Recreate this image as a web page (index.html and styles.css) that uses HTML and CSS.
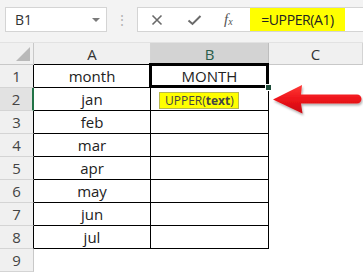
FILE: index.html
```html
<!DOCTYPE html>
<html lang="en">
<head>
    <meta charset="UTF-8">
    <title>UPPER function</title>
    <link rel="stylesheet" href="styles.css">
</head>
<body>
    <div class="toolbar">
        <div class="name-box">
            <span>B1</span>
            <span class="drop"></span>
        </div>
        <div class="grip">&#8942;</div>
        <div class="formula-box">
            <div class="fx-buttons">
                <svg class="btn-icon" width="12" height="12" viewBox="0 0 12 12">
                    <path d="M1.5 1.5 L10.5 10.5 M10.5 1.5 L1.5 10.5" stroke="#6a6a6a" stroke-width="1.6" fill="none"/>
                </svg>
                <svg class="btn-icon" width="15" height="12" viewBox="0 0 15 12">
                    <path d="M1.5 6.5 L5.5 10 L13.5 2" stroke="#6a6a6a" stroke-width="2" fill="none"/>
                </svg>
                <span class="fx">f<sub>x</sub></span>
            </div>
            <div class="formula">=UPPER(A1)</div>
        </div>
    </div>

    <div class="sheet">
        <div class="corner"><span class="tri"></span></div>
        <div class="col-head edge">A</div>
        <div class="col-head edge selected">B</div>
        <div class="col-head">C</div>

        <div class="row-head edge">1</div>
        <div class="cell">month</div>
        <div class="cell active">MONTH<span class="handle"></span></div>
        <div class="blank"></div>

        <div class="row-head edge current">2</div>
        <div class="cell">jan</div>
        <div class="cell tip-cell">
            <span class="tip">UPPER(<b>text</b>)</span>
        </div>
        <div class="blank"></div>

        <div class="row-head edge">3</div>
        <div class="cell">feb</div>
        <div class="cell"></div>
        <div class="blank"></div>

        <div class="row-head edge">4</div>
        <div class="cell">mar</div>
        <div class="cell"></div>
        <div class="blank"></div>

        <div class="row-head edge">5</div>
        <div class="cell">apr</div>
        <div class="cell"></div>
        <div class="blank"></div>

        <div class="row-head edge">6</div>
        <div class="cell">may</div>
        <div class="cell"></div>
        <div class="blank"></div>

        <div class="row-head edge">7</div>
        <div class="cell">jun</div>
        <div class="cell"></div>
        <div class="blank"></div>

        <div class="row-head edge">8</div>
        <div class="cell">jul</div>
        <div class="cell"></div>
        <div class="blank"></div>

        <div class="row-head">9</div>
        <div class="blank"></div>
        <div class="blank"></div>
        <div class="blank"></div>

        <!-- red pointer arrow over column C -->
        <svg class="arrow" width="93" height="40" viewBox="270 82 93 40">
            <defs>
                <linearGradient id="red" x1="0" y1="0" x2="0" y2="1">
                    <stop offset="0" stop-color="#ff3a36"/>
                    <stop offset="0.5" stop-color="#ee141b"/>
                    <stop offset="1" stop-color="#c90a10"/>
                </linearGradient>
                <filter id="shade" x="-10%" y="-20%" width="130%" height="150%">
                    <feDropShadow dx="1" dy="2" stdDeviation="1.2" flood-color="#000" flood-opacity="0.3"/>
                </filter>
            </defs>
            <path d="M273 99.5 L302 85 L301 94.5 L357 94.5 A4.5 4.5 0 0 1 357 103.5 L301 103.5 L302.5 113.5 Z" fill="url(#red)" filter="url(#shade)"/>
        </svg>
    </div>
</body>
</html>
```

FILE: styles.css
```css
body {
    margin: 0;
    width: 363px;
    height: 273px;
    overflow: hidden;
    background: #ffffff;
    font-family: 'Open Sans', 'Liberation Sans', sans-serif;
    color: #222222;
}

.toolbar {
    display: flex;
    align-items: flex-start;
    height: 43px;
    padding-top: 7px;
    box-sizing: border-box;
    background: #f3f3f3;
    border-bottom: 1px solid #e2e2e2;
}

.name-box {
    display: flex;
    align-items: center;
    justify-content: space-between;
    width: 102px;
    height: 25px;
    margin-left: 5px;
    padding: 0 6px 0 9px;
    box-sizing: border-box;
    background: #ffffff;
    border: 1px solid #d4d4d4;
    font-size: 14px;
    color: #333333;
}

.drop {
    width: 0;
    height: 0;
    border-left: 4px solid transparent;
    border-right: 4px solid transparent;
    border-top: 4px solid #7a7a7a;
}

.grip {
    width: 30px;
    height: 25px;
    line-height: 25px;
    text-align: center;
    color: #b5b5b5;
    font-size: 14px;
}

.formula-box {
    flex: 1;
    display: flex;
    height: 25px;
    box-sizing: border-box;
    background: #ffffff;
    border: 1px solid #d4d4d4;
    border-right: none;
}

.fx-buttons {
    display: flex;
    align-items: center;
    width: 112px;
    padding-left: 13px;
    box-sizing: border-box;
}

.btn-icon {
    margin-right: 24px;
}

.btn-icon + .btn-icon {
    margin-right: 22px;
}

.fx {
    font-family: 'Liberation Serif', serif;
    font-style: italic;
    font-size: 15px;
    color: #555555;
}

.fx sub {
    font-size: 10px;
    vertical-align: -1px;
}

.formula {
    width: 95px;
    height: 23px;
    line-height: 23px;
    text-align: center;
    background: #ffff00;
    font-size: 14px;
    letter-spacing: -0.4px;
    color: #222222;
}

.sheet {
    position: relative;
    display: grid;
    grid-template-columns: 34px 117px 118px 94px;
    grid-template-rows: 22px repeat(9, 23px);
}

.sheet > div {
    box-sizing: border-box;
}

.corner {
    display: flex;
    justify-content: flex-end;
    align-items: flex-end;
    padding: 0 3px 3px 0;
    background: #f0f0f0;
    border-right: 1px solid #c8c8c8;
    border-bottom: 1px solid #c8c8c8;
}

.tri {
    width: 0;
    height: 0;
    border-left: 14px solid transparent;
    border-bottom: 14px solid #b9b9b9;
}

.col-head {
    display: flex;
    justify-content: center;
    align-items: center;
    background: #f0f0f0;
    border-right: 1px solid #d4d4d4;
    border-bottom: 1px solid #c8c8c8;
    font-size: 15px;
    color: #333333;
}

.col-head.edge {
    border-bottom-color: #000000;
}

.col-head.selected {
    background: #d3d3d3;
    color: #2b5d4b;
    border-right-color: #bdbdbd;
}

.row-head {
    display: flex;
    justify-content: center;
    align-items: center;
    background: #f0f0f0;
    border-right: 1px solid #c8c8c8;
    border-bottom: 1px solid #d4d4d4;
    font-size: 15px;
    color: #444444;
}

.row-head.edge {
    border-right-color: #000000;
}

.row-head.current {
    background: #e2e2e2;
    border-right: 2px solid #217346;
}

.cell {
    position: relative;
    display: flex;
    justify-content: center;
    align-items: center;
    border-right: 1px solid #000000;
    border-bottom: 1px solid #000000;
    font-size: 15px;
    color: #222222;
}

.cell.active::after {
    content: "";
    position: absolute;
    left: -2px;
    top: -2px;
    right: -1px;
    bottom: -1px;
    border: 3px solid #000000;
}

.handle {
    position: absolute;
    right: -4px;
    bottom: -4px;
    width: 5px;
    height: 5px;
    background: #1e4d3a;
    border: 1px solid #ffffff;
    z-index: 2;
}

.tip-cell {
    justify-content: flex-start;
    align-items: flex-start;
}

.tip {
    position: absolute;
    left: 8px;
    top: 4px;
    width: 80px;
    height: 17px;
    line-height: 15px;
    box-sizing: border-box;
    padding-left: 5px;
    background: #ffff00;
    border: 1px solid #b9b94a;
    font-size: 12px;
    color: #444444;
    white-space: nowrap;
}

.tip b {
    font-weight: 700;
}

.arrow {
    position: absolute;
    left: 270px;
    top: 39px;
}
```
